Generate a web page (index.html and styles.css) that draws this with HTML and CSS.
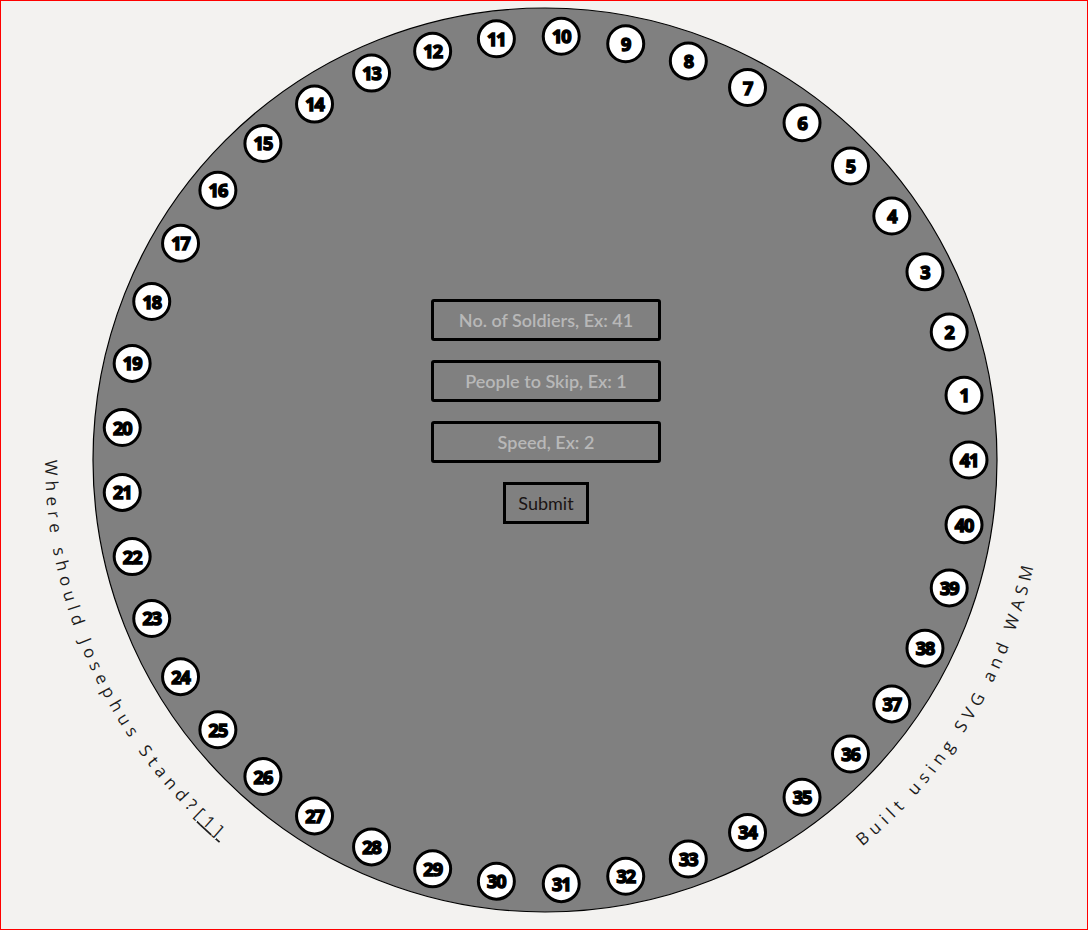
FILE: index.html
```html
<!DOCTYPE html>
<html lang="en">
<head>
<meta charset="utf-8">
<title>Josephus</title>
<link rel="stylesheet" href="styles.css">
</head>
<body>
<div class="stage">
  <svg class="board" width="1086" height="928" viewBox="1 1 1086 928" xmlns="http://www.w3.org/2000/svg">
    <defs>
      <path id="ring" d="M 45 460 A 500 500 0 1 0 1045 460 A 500 500 0 1 0 45 460"/>
    </defs>
    <circle class="arena" cx="545" cy="460" r="452"/>
    <text class="caption"><textPath href="#ring" startOffset="0">Where should Josephus Stand?<a class="ref" href="#">[1]</a></textPath></text>
    <text class="caption"><textPath href="#ring" startOffset="1129">Built using SVG and WASM</textPath></text>
    <g class="soldiers">
      <g transform="translate(545 460) rotate(-8.7805) translate(424 0) rotate(8.7805)"><circle r="18"/><text>1</text></g>
      <g transform="translate(545 460) rotate(-17.561) translate(424 0) rotate(17.561)"><circle r="18"/><text>2</text></g>
      <g transform="translate(545 460) rotate(-26.3415) translate(424 0) rotate(26.3415)"><circle r="18"/><text>3</text></g>
      <g transform="translate(545 460) rotate(-35.122) translate(424 0) rotate(35.122)"><circle r="18"/><text>4</text></g>
      <g transform="translate(545 460) rotate(-43.9024) translate(424 0) rotate(43.9024)"><circle r="18"/><text>5</text></g>
      <g transform="translate(545 460) rotate(-52.6829) translate(424 0) rotate(52.6829)"><circle r="18"/><text>6</text></g>
      <g transform="translate(545 460) rotate(-61.4634) translate(424 0) rotate(61.4634)"><circle r="18"/><text>7</text></g>
      <g transform="translate(545 460) rotate(-70.2439) translate(424 0) rotate(70.2439)"><circle r="18"/><text>8</text></g>
      <g transform="translate(545 460) rotate(-79.0244) translate(424 0) rotate(79.0244)"><circle r="18"/><text>9</text></g>
      <g transform="translate(545 460) rotate(-87.8049) translate(424 0) rotate(87.8049)"><circle r="18"/><text>10</text></g>
      <g transform="translate(545 460) rotate(-96.5854) translate(424 0) rotate(96.5854)"><circle r="18"/><text>11</text></g>
      <g transform="translate(545 460) rotate(-105.3659) translate(424 0) rotate(105.3659)"><circle r="18"/><text>12</text></g>
      <g transform="translate(545 460) rotate(-114.1463) translate(424 0) rotate(114.1463)"><circle r="18"/><text>13</text></g>
      <g transform="translate(545 460) rotate(-122.9268) translate(424 0) rotate(122.9268)"><circle r="18"/><text>14</text></g>
      <g transform="translate(545 460) rotate(-131.7073) translate(424 0) rotate(131.7073)"><circle r="18"/><text>15</text></g>
      <g transform="translate(545 460) rotate(-140.4878) translate(424 0) rotate(140.4878)"><circle r="18"/><text>16</text></g>
      <g transform="translate(545 460) rotate(-149.2683) translate(424 0) rotate(149.2683)"><circle r="18"/><text>17</text></g>
      <g transform="translate(545 460) rotate(-158.0488) translate(424 0) rotate(158.0488)"><circle r="18"/><text>18</text></g>
      <g transform="translate(545 460) rotate(-166.8293) translate(424 0) rotate(166.8293)"><circle r="18"/><text>19</text></g>
      <g transform="translate(545 460) rotate(-175.6098) translate(424 0) rotate(175.6098)"><circle r="18"/><text>20</text></g>
      <g transform="translate(545 460) rotate(-184.3902) translate(424 0) rotate(184.3902)"><circle r="18"/><text>21</text></g>
      <g transform="translate(545 460) rotate(-193.1707) translate(424 0) rotate(193.1707)"><circle r="18"/><text>22</text></g>
      <g transform="translate(545 460) rotate(-201.9512) translate(424 0) rotate(201.9512)"><circle r="18"/><text>23</text></g>
      <g transform="translate(545 460) rotate(-210.7317) translate(424 0) rotate(210.7317)"><circle r="18"/><text>24</text></g>
      <g transform="translate(545 460) rotate(-219.5122) translate(424 0) rotate(219.5122)"><circle r="18"/><text>25</text></g>
      <g transform="translate(545 460) rotate(-228.2927) translate(424 0) rotate(228.2927)"><circle r="18"/><text>26</text></g>
      <g transform="translate(545 460) rotate(-237.0732) translate(424 0) rotate(237.0732)"><circle r="18"/><text>27</text></g>
      <g transform="translate(545 460) rotate(-245.8537) translate(424 0) rotate(245.8537)"><circle r="18"/><text>28</text></g>
      <g transform="translate(545 460) rotate(-254.6341) translate(424 0) rotate(254.6341)"><circle r="18"/><text>29</text></g>
      <g transform="translate(545 460) rotate(-263.4146) translate(424 0) rotate(263.4146)"><circle r="18"/><text>30</text></g>
      <g transform="translate(545 460) rotate(-272.1951) translate(424 0) rotate(272.1951)"><circle r="18"/><text>31</text></g>
      <g transform="translate(545 460) rotate(-280.9756) translate(424 0) rotate(280.9756)"><circle r="18"/><text>32</text></g>
      <g transform="translate(545 460) rotate(-289.7561) translate(424 0) rotate(289.7561)"><circle r="18"/><text>33</text></g>
      <g transform="translate(545 460) rotate(-298.5366) translate(424 0) rotate(298.5366)"><circle r="18"/><text>34</text></g>
      <g transform="translate(545 460) rotate(-307.3171) translate(424 0) rotate(307.3171)"><circle r="18"/><text>35</text></g>
      <g transform="translate(545 460) rotate(-316.0976) translate(424 0) rotate(316.0976)"><circle r="18"/><text>36</text></g>
      <g transform="translate(545 460) rotate(-324.878) translate(424 0) rotate(324.878)"><circle r="18"/><text>37</text></g>
      <g transform="translate(545 460) rotate(-333.6585) translate(424 0) rotate(333.6585)"><circle r="18"/><text>38</text></g>
      <g transform="translate(545 460) rotate(-342.439) translate(424 0) rotate(342.439)"><circle r="18"/><text>39</text></g>
      <g transform="translate(545 460) rotate(-351.2195) translate(424 0) rotate(351.2195)"><circle r="18"/><text>40</text></g>
      <g transform="translate(545 460) translate(424 0)"><circle r="18"/><text>41</text></g>
    </g>
  </svg>
  <form class="controls" onsubmit="return false">
    <input class="field" type="text" placeholder="No. of Soldiers, Ex: 41">
    <input class="field" type="text" placeholder="People to Skip, Ex: 1">
    <input class="field" type="text" placeholder="Speed, Ex: 2">
    <button class="submit" type="submit">Submit</button>
  </form>
</div>
</body>
</html>
```

FILE: styles.css
```css
html, body {
  margin: 0;
  padding: 0;
  background: #f3f2f0;
}

.stage {
  position: relative;
  width: 1088px;
  height: 930px;
  box-sizing: border-box;
  border: 1px solid #ff0000;
  background: #f3f2f0;
  overflow: hidden;
}

.board {
  display: block;
}

.arena {
  fill: #808080;
  stroke: #000;
  stroke-width: 1.2;
}

.caption {
  font-family: "Open Sans", "Noto Sans", sans-serif;
  font-size: 17px;
  letter-spacing: 5.4px;
  fill: #1c1c1c;
}

.ref {
  text-decoration: underline;
  fill: #1c1c1c;
}

.soldiers circle {
  fill: #ffffff;
  stroke: #000;
  stroke-width: 3;
}

.soldiers text {
  font-family: "Noto Sans", "DejaVu Sans", sans-serif;
  font-weight: 700;
  font-size: 18px;
  letter-spacing: -1px;
  fill: #000;
  stroke: #000;
  stroke-width: 1.5;
  text-anchor: middle;
  dominant-baseline: central;
}

.controls {
  position: absolute;
  left: 430px;
  top: 298px;
  width: 230px;
  margin: 0;
  display: flex;
  flex-direction: column;
  align-items: center;
  gap: 19px;
}

.field {
  box-sizing: border-box;
  width: 230px;
  height: 42px;
  margin: 0;
  padding: 0 6px;
  border: 3px solid #000;
  border-radius: 3px;
  background: transparent;
  font-family: "Lato", "Noto Sans", sans-serif;
  font-size: 18px;
  font-weight: 600;
  text-align: center;
  color: #111;
  outline: none;
}

.field::placeholder {
  color: #b8b8b8;
  opacity: 1;
}

.submit {
  box-sizing: border-box;
  width: 86px;
  height: 42px;
  margin: 0;
  padding: 0;
  border: 3px solid #000;
  border-radius: 0;
  background: transparent;
  font-family: "Lato", "Noto Sans", sans-serif;
  font-size: 18px;
  color: #1a1414;
  cursor: pointer;
}
```
